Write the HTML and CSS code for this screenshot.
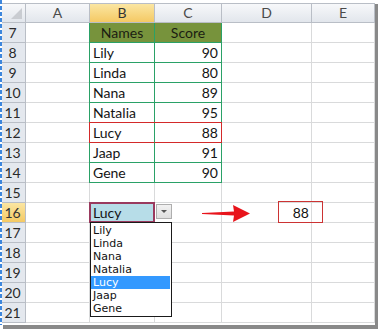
FILE: index.html
```html
<!DOCTYPE html>
<html>
  <head>
    <title>Drop-down list</title>
    <link rel="stylesheet" href="styles.css">
  </head>
  <body>
    <div class="frame">
      <div class="sheet">
        <div class="c hd corner"></div>
        <div class="c hd">A</div>
        <div class="c hd on">B</div>
        <div class="c hd">C</div>
        <div class="c hd">D</div>
        <div class="c hd">E</div>

        <div class="c rh">7</div>
        <div class="c"></div>
        <div class="c t b th">Names</div>
        <div class="c t th">Score</div>
        <div class="c"></div>
        <div class="c"></div>

        <div class="c rh">8</div>
        <div class="c"></div>
        <div class="c t b">Lily</div>
        <div class="c t num">90</div>
        <div class="c"></div>
        <div class="c"></div>

        <div class="c rh">9</div>
        <div class="c"></div>
        <div class="c t b">Linda</div>
        <div class="c t num">80</div>
        <div class="c"></div>
        <div class="c"></div>

        <div class="c rh">10</div>
        <div class="c"></div>
        <div class="c t b">Nana</div>
        <div class="c t num">89</div>
        <div class="c"></div>
        <div class="c"></div>

        <div class="c rh">11</div>
        <div class="c"></div>
        <div class="c t b">Natalia</div>
        <div class="c t num">95</div>
        <div class="c"></div>
        <div class="c"></div>

        <div class="c rh">12</div>
        <div class="c"></div>
        <div class="c t b red">Lucy</div>
        <div class="c t num red">88</div>
        <div class="c"></div>
        <div class="c"></div>

        <div class="c rh">13</div>
        <div class="c"></div>
        <div class="c t b">Jaap</div>
        <div class="c t num">91</div>
        <div class="c"></div>
        <div class="c"></div>

        <div class="c rh">14</div>
        <div class="c"></div>
        <div class="c t b">Gene</div>
        <div class="c t num">90</div>
        <div class="c"></div>
        <div class="c"></div>

        <div class="c rh">15</div>
        <div class="c"></div>
        <div class="c"></div>
        <div class="c"></div>
        <div class="c"></div>
        <div class="c"></div>

        <div class="c rh on">16</div>
        <div class="c"></div>
        <div class="c active">Lucy</div>
        <div class="c"></div>
        <div class="c num result">88</div>
        <div class="c"></div>

        <div class="c rh">17</div>
        <div class="c"></div>
        <div class="c"></div>
        <div class="c"></div>
        <div class="c"></div>
        <div class="c"></div>

        <div class="c rh">18</div>
        <div class="c"></div>
        <div class="c"></div>
        <div class="c"></div>
        <div class="c"></div>
        <div class="c"></div>

        <div class="c rh">19</div>
        <div class="c"></div>
        <div class="c"></div>
        <div class="c"></div>
        <div class="c"></div>
        <div class="c"></div>

        <div class="c rh">20</div>
        <div class="c"></div>
        <div class="c"></div>
        <div class="c"></div>
        <div class="c"></div>
        <div class="c"></div>

        <div class="c rh">21</div>
        <div class="c"></div>
        <div class="c"></div>
        <div class="c"></div>
        <div class="c"></div>
        <div class="c"></div>
      </div>

      <!-- overlays -->
      <div class="marquee"></div>
      <div class="dd_btn"><span class="tri"></span></div>
      <ul class="dd_list">
        <li>Lily</li>
        <li>Linda</li>
        <li>Nana</li>
        <li>Natalia</li>
        <li class="pick">Lucy</li>
        <li>Jaap</li>
        <li>Gene</li>
      </ul>
      <svg class="arrow" width="52" height="20" viewBox="0 0 52 20">
        <polygon points="2,9 34,7.5 33,1 50,9.5 33,18 34,11.5 2,10" fill="#e8141b" />
      </svg>
      <div class="result_box"></div>
    </div>
  </body>
</html>
```

FILE: styles.css
```css
* {
  margin: 0px;
  padding: 0px;
  box-sizing: border-box;
}
body {
  width: 378px;
  height: 329px;
  background: #fff;
  overflow: hidden;
  font-family: Lato, "Liberation Sans", sans-serif;
}
.frame {
  position: relative;
  width: 375px;
  height: 325px;
  padding-top: 3px;
  background: #fff;
  box-shadow: 3px 4px 0 #898989;
}
.sheet {
  display: grid;
  grid-template-columns: 26px 64px 65px 67px 90px 63px;
  grid-template-rows: repeat(16, 20px);
}
.c {
  border-right: 1px solid #d9dadb;
  border-bottom: 1px solid #d9dadb;
  font-size: 14px;
  line-height: 19px;
  padding: 0 3px;
  white-space: nowrap;
  color: #141414;
}

/* headers */
.hd {
  border-top: 1px solid #b9bec6;
  border-color: #b9bec6;
  background: linear-gradient(#f7f8fa, #e2e6ec);
  text-align: center;
  color: #4a4a4a;
  line-height: 18px;
}
.rh {
  border-color: #b9bec6;
  background: #e4e8ee;
  text-align: center;
  padding: 0;
  color: #2a2a2a;
}
.hd.on,
.rh.on {
  background: linear-gradient(#fbe6a2, #f4c964);
  color: #333;
}
.corner {
  position: relative;
}
.corner::after {
  content: "";
  position: absolute;
  right: 3px;
  bottom: 3px;
  border-left: 11px solid transparent;
  border-bottom: 11px solid #c9ccd1;
}

/* data table */
.t {
  border-right-color: #2aa167;
  border-bottom-color: #2aa167;
}
.t.b {
  box-shadow: -1px 0 0 #2aa167;
}
.th {
  background: #77933c;
  text-align: center;
  color: #1b1d12;
}
.num {
  text-align: right;
}
.red {
  border-bottom-color: #d32a2a;
  box-shadow: 0 -1px 0 #d32a2a;
}
.t.num.red {
  border-right-color: #d32a2a;
}
.t.b.red {
  box-shadow: -1px 0 0 #d32a2a, 0 -1px 0 #d32a2a, -1px -1px 0 #d32a2a;
}
.active {
  background: #b7dde8;
  border-right-color: #9a3a5e;
  border-bottom-color: #9a3a5e;
  box-shadow: -1px 0 0 #9a3a5e, 0 -1px 0 #9a3a5e, -1px -1px 0 #9a3a5e,
    inset 0 0 0 1px #9a3a5e;
}
.result {
  padding-right: 2px;
}

/* overlays */
.marquee {
  position: absolute;
  left: 0;
  top: 0;
  width: 2px;
  height: 325px;
  background: repeating-linear-gradient(#3d86dc 0 4px, #fff 4px 6px);
}
.dd_btn {
  position: absolute;
  left: 156px;
  top: 204px;
  width: 16px;
  height: 15px;
  background: linear-gradient(#f2f2f2, #dedede);
  border: 1px solid #aeaeae;
  display: flex;
  align-items: center;
  justify-content: center;
}
.tri {
  border-left: 3px solid transparent;
  border-right: 3px solid transparent;
  border-top: 3px solid #555;
}
.dd_list {
  position: absolute;
  left: 90px;
  top: 222px;
  width: 82px;
  list-style-type: none;
  background: #fff;
  border: 1px solid #1a1a1a;
  padding: 1px 1px 1px 0;
  font-family: "DejaVu Sans", sans-serif;
  font-size: 11px;
}
.dd_list li {
  height: 13px;
  line-height: 13px;
  padding-left: 2px;
  color: #111;
}
.dd_list .pick {
  background: #3399ff;
  color: #fff;
}
.arrow {
  position: absolute;
  left: 200px;
  top: 204px;
}
.result_box {
  position: absolute;
  left: 278px;
  top: 201px;
  width: 45px;
  height: 22px;
  border: 1px solid #cc3333;
}
```
